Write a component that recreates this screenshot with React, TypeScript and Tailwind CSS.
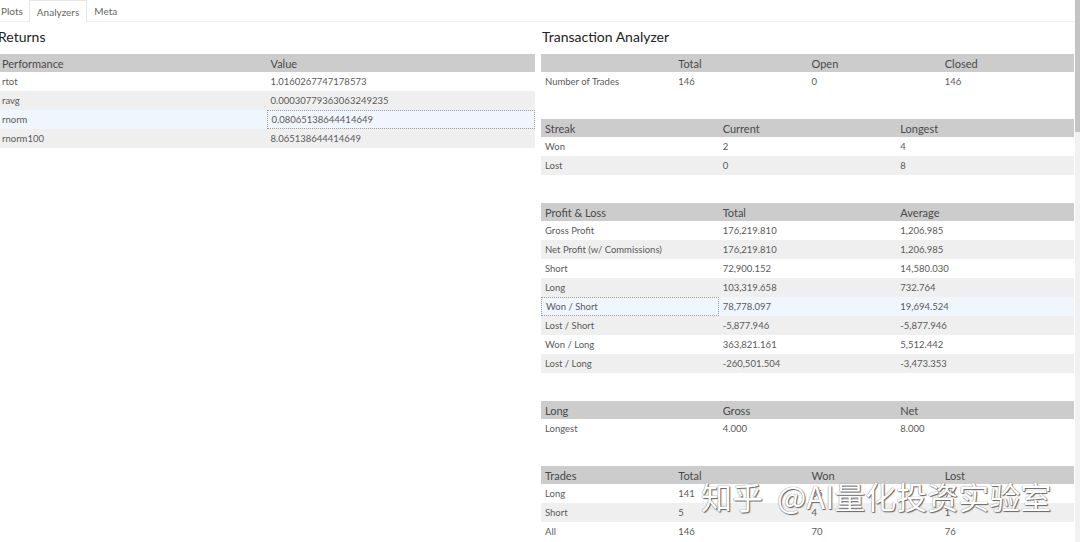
type Row = { cells: string[]; selected?: number };

interface TableProps {
  head: string[];
  rows: Row[];
  cols: string;
}

function DataTable({ head, rows, cols }: TableProps) {
  return (
    <div className="w-full">
      <div className={`grid ${cols} h-[18px] items-center bg-[#cccccc] text-[11px] text-[#4a4a4a]`}>
        {head.map((h, i) => (
          <div key={i} className="px-[4px] leading-none">
            {h}
          </div>
        ))}
      </div>
      {rows.map((r, ri) => (
        <div
          key={ri}
          className={`grid ${cols} h-[19px] items-center text-[9.5px] text-[#5a5a5a] ${
            r.selected !== undefined ? 'bg-[#f0f6fd]' : ri % 2 === 1 ? 'bg-[#efefef]' : 'bg-white'
          }`}
        >
          {r.cells.map((c, ci) => (
            <div
              key={ci}
              className={`h-full flex items-center px-[4px] leading-none ${
                r.selected === ci ? 'border border-dotted border-[#999] px-[3px]' : ''
              }`}
            >
              {c}
            </div>
          ))}
        </div>
      ))}
    </div>
  );
}

export default function App() {
  return (
    <div
      className="relative w-[1080px] h-[542px] overflow-hidden bg-white flex"
      style={{ fontFamily: 'Lato, "Open Sans", sans-serif' }}
    >
      <div className="flex-1 flex flex-col">
        {/* Tabs */}
        <div className="h-[22px] border-b border-[#eeeeee] flex items-end text-[10px] text-[#666]">
          <div className="h-[22px] pt-[2px] pl-[1px] pr-[6px] flex items-center">Plots</div>
          <div className="h-[22px] pt-[2px] px-[7px] flex items-center border-x border-t border-[#e6e6e6] bg-white -mb-px">
            Analyzers
          </div>
          <div className="h-[22px] pt-[2px] px-[7px] flex items-center">Meta</div>
        </div>

        <div className="flex gap-[6px] pr-[1px]">
          {/* Returns */}
          <div className="w-[537px] shrink-0 -ml-[2px]">
            <div className="h-[32px] pb-[4px] flex items-center text-[14px] text-[#222]">Returns</div>
            <DataTable
              cols="grid-cols-2"
              head={['Performance', 'Value']}
              rows={[
                { cells: ['rtot', '1.0160267747178573'] },
                { cells: ['ravg', '0.00030779363063249235'] },
                { cells: ['rnorm', '0.08065138644414649'], selected: 1 },
                { cells: ['rnorm100', '8.065138644414649'] },
              ]}
            />
          </div>

          {/* Transaction Analyzer */}
          <div className="flex-1 flex flex-col gap-[28px]">
            <div>
              <div className="h-[32px] pb-[4px] flex items-center text-[14px] text-[#222] pl-[1px]">
                Transaction Analyzer
              </div>
              <DataTable
                cols="grid-cols-4"
                head={['', 'Total', 'Open', 'Closed']}
                rows={[{ cells: ['Number of Trades', '146', '0', '146'] }]}
              />
            </div>
            <DataTable
              cols="grid-cols-3"
              head={['Streak', 'Current', 'Longest']}
              rows={[{ cells: ['Won', '2', '4'] }, { cells: ['Lost', '0', '8'] }]}
            />
            <DataTable
              cols="grid-cols-3"
              head={['Profit & Loss', 'Total', 'Average']}
              rows={[
                { cells: ['Gross Profit', '176,219.810', '1,206.985'] },
                { cells: ['Net Profit (w/ Commissions)', '176,219.810', '1,206.985'] },
                { cells: ['Short', '72,900.152', '14,580.030'] },
                { cells: ['Long', '103,319.658', '732.764'] },
                { cells: ['Won / Short', '78,778.097', '19,694.524'], selected: 0 },
                { cells: ['Lost / Short', '-5,877.946', '-5,877.946'] },
                { cells: ['Won / Long', '363,821.161', '5,512.442'] },
                { cells: ['Lost / Long', '-260,501.504', '-3,473.353'] },
              ]}
            />
            <DataTable
              cols="grid-cols-3"
              head={['Long', 'Gross', 'Net']}
              rows={[{ cells: ['Longest', '4.000', '8.000'] }]}
            />
            <DataTable
              cols="grid-cols-4"
              head={['Trades', 'Total', 'Won', 'Lost']}
              rows={[
                { cells: ['Long', '141', '66', '75'] },
                { cells: ['Short', '5', '4', '1'] },
                { cells: ['All', '146', '70', '76'] },
              ]}
            />
          </div>
        </div>
      </div>

      {/* Scrollbar */}
      <div className="w-[5px] shrink-0 bg-[#f1f1f1] flex flex-col">
        <div className="h-[132px] bg-[#c4c4c4]" />
      </div>

      {/* Watermark */}
      <div
        className="absolute left-[701px] top-[473px] flex items-center text-[31px] text-white [text-shadow:0_0_1px_#555,1px_1px_1px_#666]"
        style={{ fontFamily: '"Noto Sans CJK SC", sans-serif' }}
      >
        <span>知乎</span>
        <span className="ml-[14px]">@AI量化投资实验室</span>
      </div>
    </div>
  );
}
